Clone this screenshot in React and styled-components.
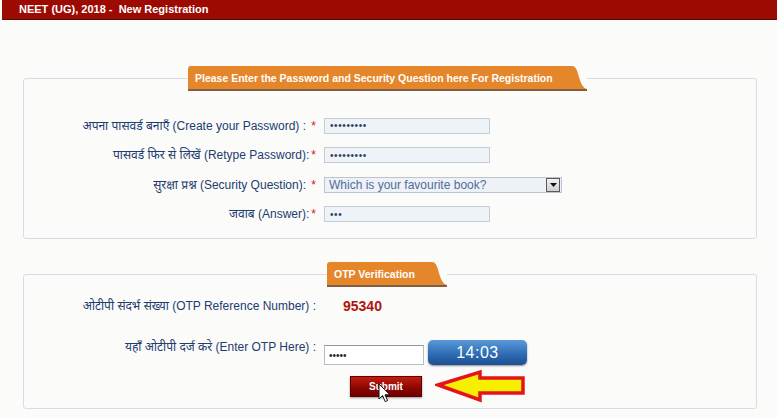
import React from 'react';
import styled, { createGlobalStyle } from 'styled-components';

const GlobalStyle = createGlobalStyle`
  body {
    margin: 0;
    background: #fbfbf9;
    font-family: "Liberation Sans", "Noto Sans Devanagari", "Noto Sans", Arial, sans-serif;
  }
`;

function App() {
  return (
    <Page>
      <GlobalStyle />
      <Header>NEET (UG), 2018 -&nbsp; New Registration</Header>

      <Box $top={46} $padTop={20} $padBottom={9}>
        <Legend $offset={164}>
          <Tab $padRight={16}>Please Enter the Password and Security Question here For Registration</Tab>
          <TabTail />
        </Legend>
        <Row $h={29.5}>
          <Label>अपना पासवर्ड बनाएँ (Create your Password) : <Star>*</Star></Label>
          <TextInput type="password" value="123456789" readOnly />
        </Row>
        <Row $h={29.5}>
          <Label>पासवर्ड फिर से लिखें (Retype Password):<Star>*</Star></Label>
          <TextInput type="password" value="123456789" readOnly />
        </Row>
        <Row $h={29.5}>
          <Label>सुरक्षा प्रश्न (Security Question): <Star>*</Star></Label>
          <SelectBox>
            <span>Which is your favourite book?</span>
            <DropBtn>
              <svg width="7" height="4" viewBox="0 0 7 4"><path d="M0 0h7L3.5 4z" fill="#111" /></svg>
            </DropBtn>
          </SelectBox>
        </Row>
        <Row $h={29.5}>
          <Label>जवाब (Answer):<Star>*</Star></Label>
          <TextInput type="password" value="abc" readOnly />
        </Row>
      </Box>

      <Box $top={23} $padTop={9} $padBottom={11}>
        <Legend $offset={303}>
          <Tab $padRight={14}>OTP Verification</Tab>
          <TabTail />
        </Legend>
        <Row $h={20}>
          <Label>ओटीपी संदर्भ संख्या (OTP Reference Number) :</Label>
          <RefNumber>95340</RefNumber>
        </Row>
        <Row $h={25} $mt={24} $align="flex-start">
          <Label>यहाँ ओटीपी दर्ज करे (Enter OTP Here) :</Label>
          <OtpField>
            <OtpInput type="password" value="12345" readOnly />
            <Timer>14:03</Timer>
          </OtpField>
        </Row>
        <Row $h={21} $mt={11}>
          <Label />
          <SubmitRow>
            <SubmitBtn>Submit</SubmitBtn>
            <Cursor width="13" height="20" viewBox="0 0 13 20">
              <path d="M1 1v15l3.6-3.4 2.6 6 2.4-1-2.6-5.8H12z" fill="#fff" stroke="#111" strokeWidth="1" strokeLinejoin="round" />
            </Cursor>
            <Pointer width="92" height="34" viewBox="0 0 92 34">
              <path d="M3 16 L45 3 L45 9 L88 9 L88 24 L45 24 L45 31 Z" fill="#f6ef00" stroke="#e5141b" strokeWidth="3.5" strokeLinejoin="miter" />
            </Pointer>
          </SubmitRow>
        </Row>
      </Box>
    </Page>
  );
}

function TabTail() {
  return (
    <Tail width="18" height="25" viewBox="0 0 18 25">
      <path d="M0 0H3C7 0 8 4 10 11C12 18 14 22 18 23V25H0Z" fill="#e5862a" />
      <path d="M0 24H18" stroke="#7f5f45" strokeWidth="2" />
    </Tail>
  );
}

const Page = styled.div`
  width: 777px;
  height: 418px;
  overflow: hidden;
`;

const Header = styled.div`
  margin-left: 2px;
  height: 19px;
  line-height: 19px;
  padding-left: 17px;
  background: #9c0a02;
  border-bottom: 1px solid #4d130a;
  color: #fff;
  font-size: 11px;
  font-weight: bold;
  white-space: pre;
`;

const Box = styled.fieldset`
  margin: ${({ $top }) => $top}px 20px 0 23px;
  padding: ${({ $padTop }) => $padTop}px 0 ${({ $padBottom }) => $padBottom}px;
  border: 1px solid #d7dde5;
  border-radius: 3px;
  min-width: 0;
`;

const Legend = styled.legend`
  margin-left: ${({ $offset }) => $offset}px;
  padding: 0;
  display: flex;
  height: 25px;
`;

const Tab = styled.div`
  height: 23px;
  line-height: 24px;
  padding: 0 ${({ $padRight }) => $padRight}px 0 7px;
  background: #e5862a;
  border-bottom: 2px solid #7f5f45;
  border-top-left-radius: 3px;
  color: #fff;
  font-size: 10.5px;
  font-weight: bold;
  white-space: nowrap;
`;

const Tail = styled.svg`
  display: block;
`;

const Row = styled.div`
  display: flex;
  align-items: ${({ $align }) => $align || 'center'};
  gap: 8px;
  height: ${({ $h }) => $h}px;
  margin-top: ${({ $mt }) => $mt || 0}px;
`;

const Label = styled.div`
  flex: 0 0 292px;
  text-align: right;
  color: #223c70;
  font-size: 12px;
  line-height: 14px;
  white-space: nowrap;
`;

const Star = styled.span`
  color: #d4151c;
  margin-left: 2px;
`;

const TextInput = styled.input`
  box-sizing: border-box;
  width: 166px;
  height: 16px;
  padding: 0 5px;
  border: 1px solid #c4ccd5;
  background: #eef3f7;
  color: #2c3e60;
  font-size: 10px;
  letter-spacing: 0.6px;
  outline: none;
`;

const SelectBox = styled.div`
  box-sizing: border-box;
  width: 238px;
  height: 16px;
  display: flex;
  align-items: center;
  justify-content: space-between;
  padding-left: 4px;
  border: 1px solid #bcc5cf;
  background: #eef2f6;
  color: #4e6d9c;
  font-size: 12px;
`;

const DropBtn = styled.div`
  box-sizing: border-box;
  width: 14px;
  height: 14px;
  margin-right: 1px;
  display: flex;
  align-items: center;
  justify-content: center;
  border: 1px solid #5a5a5a;
  background: linear-gradient(#f2f2f2, #cfcfcf);
`;

const RefNumber = styled.span`
  margin-left: 19px;
  color: #b0150f;
  font-size: 14px;
  font-weight: bold;
`;

const OtpField = styled.div`
  display: flex;
  align-items: flex-end;
  gap: 4px;
  height: 25px;
`;

const OtpInput = styled.input`
  box-sizing: border-box;
  width: 100px;
  height: 20px;
  padding: 0 4px;
  border: 1px solid #b5bcc5;
  border-top-color: #8d959f;
  background: #fff;
  color: #222;
  font-size: 10px;
  outline: none;
`;

const Timer = styled.div`
  width: 99px;
  height: 25px;
  border-radius: 5px;
  background: linear-gradient(#5a9ada, #2f6db4 55%, #1d4f92);
  box-shadow: 0 1px 2px rgba(0, 0, 0, 0.45);
  color: #fff;
  font-size: 16px;
  line-height: 25px;
  text-align: center;
  letter-spacing: 0.5px;
`;

const SubmitRow = styled.div`
  position: relative;
  padding-left: 26px;
`;

const SubmitBtn = styled.div`
  box-sizing: border-box;
  width: 72px;
  height: 21px;
  border: 1px solid #5e0000;
  background: linear-gradient(#c21d12, #8a0500 60%, #6e0000);
  box-shadow: 0 1px 2px rgba(0, 0, 0, 0.4);
  color: #fff;
  font-size: 10px;
  font-weight: bold;
  line-height: 19px;
  text-align: center;
`;

const Cursor = styled.svg`
  position: absolute;
  left: 54px;
  top: 7px;
`;

const Pointer = styled.svg`
  position: absolute;
  left: 111px;
  top: -7px;
`;

export default App;
